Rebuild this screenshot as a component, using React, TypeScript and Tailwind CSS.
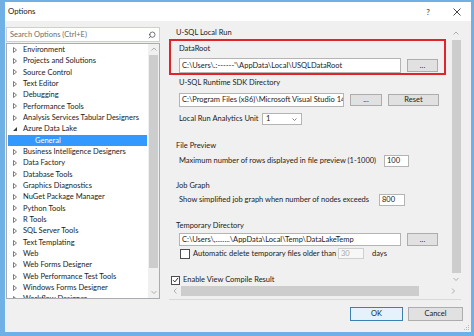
import React from 'react'
import { Search } from 'lucide-react'

type Kind = 'closed' | 'open' | 'selected'

const tree: { label: string; kind: Kind }[] = [
  { label: 'Environment', kind: 'closed' },
  { label: 'Projects and Solutions', kind: 'closed' },
  { label: 'Source Control', kind: 'closed' },
  { label: 'Text Editor', kind: 'closed' },
  { label: 'Debugging', kind: 'closed' },
  { label: 'Performance Tools', kind: 'closed' },
  { label: 'Analysis Services Tabular Designers', kind: 'closed' },
  { label: 'Azure Data Lake', kind: 'open' },
  { label: 'General', kind: 'selected' },
  { label: 'Business Intelligence Designers', kind: 'closed' },
  { label: 'Data Factory', kind: 'closed' },
  { label: 'Database Tools', kind: 'closed' },
  { label: 'Graphics Diagnostics', kind: 'closed' },
  { label: 'NuGet Package Manager', kind: 'closed' },
  { label: 'Python Tools', kind: 'closed' },
  { label: 'R Tools', kind: 'closed' },
  { label: 'SQL Server Tools', kind: 'closed' },
  { label: 'Text Templating', kind: 'closed' },
  { label: 'Web', kind: 'closed' },
  { label: 'Web Forms Designer', kind: 'closed' },
  { label: 'Web Performance Test Tools', kind: 'closed' },
  { label: 'Windows Forms Designer', kind: 'closed' },
  { label: 'Workflow Designer', kind: 'closed' },
]

function TreeRow({ label, kind }: { label: string; kind: Kind }) {
  if (kind === 'selected') {
    return (
      <div className="mx-[1px] flex h-[11.35px] shrink-0 items-center bg-[#3399ff] pl-[27px] text-white">
        {label}
      </div>
    )
  }
  return (
    <div className="flex h-[11.35px] shrink-0 items-center pl-[6px]">
      {kind === 'closed' ? (
        <svg width="4" height="6" viewBox="0 0 4 6">
          <path d="M0.5 0.5 L3.5 3 L0.5 5.5 Z" fill="none" stroke="#5a5a5a" strokeWidth="0.8" />
        </svg>
      ) : (
        <svg width="4" height="6" viewBox="0 0 4 6">
          <path d="M4 1 L4 5 L0 5 Z" fill="#3a3a3a" />
        </svg>
      )}
      <span className="ml-[6px] whitespace-nowrap">{label}</span>
    </div>
  )
}

function Chevron({ dir }: { dir: 'up' | 'down' | 'left' | 'right' }) {
  const d = {
    up: 'M0.5 3.5 L3 1 L5.5 3.5',
    down: 'M0.5 1 L3 3.5 L5.5 1',
    left: 'M3.5 0.5 L1 3 L3.5 5.5',
    right: 'M1 0.5 L3.5 3 L1 5.5',
  }[dir]
  const w = dir === 'up' || dir === 'down' ? 6 : 5
  const h = dir === 'up' || dir === 'down' ? 5 : 6
  return (
    <svg width={w} height={h} viewBox={`0 0 ${w} ${h}`}>
      <path d={d} fill="none" stroke="#a6a6a6" strokeWidth="0.9" />
    </svg>
  )
}

function TextBox({ className, value, disabled }: { className: string; value: string; disabled?: boolean }) {
  return (
    <div
      className={`flex items-center overflow-hidden whitespace-nowrap border pl-[2px] ${
        disabled ? 'border-[#cfcfcf] bg-[#f7f7f7] text-[#a8a8a8]' : 'border-[#b4b4b4] bg-white'
      } ${className}`}
    >
      {value}
    </div>
  )
}

function Btn({ className, children }: { className: string; children: React.ReactNode }) {
  return (
    <div className={`flex items-center justify-center border border-[#adadad] bg-[#e1e1e1] ${className}`}>
      {children}
    </div>
  )
}

function CheckBox({ checked, className }: { checked?: boolean; className: string }) {
  return (
    <div className={`flex items-center justify-center border border-[#4d4d4d] bg-white ${className}`}>
      {checked && (
        <svg width="8" height="8" viewBox="0 0 8 8">
          <path d="M1.2 4.2 L3.2 6.2 L7 1.6" fill="none" stroke="#222" strokeWidth="1.1" />
        </svg>
      )}
    </div>
  )
}

export default function App() {
  return (
    <div className="h-[336px] w-[474px] bg-[#6fb1e6] pb-[4px] pl-[5px] pr-[3px] pt-[2px] font-['Lato','Noto_Sans',sans-serif] text-[7.5px] leading-none text-[#1b1b1b]">
      <div className="flex h-full flex-col">
        {/* title bar */}
        <div className="flex h-[19px] shrink-0 items-center bg-white pl-[3px]">
          <span className="text-[7.8px]">Options</span>
          <span className="ml-auto w-[12px] text-center text-[8px] text-[#333]">?</span>
          <span className="ml-[17px] mr-[8px] flex w-[12px] justify-center">
            <svg width="8" height="8" viewBox="0 0 8 8">
              <path d="M0.5 0.5 L7.5 7.5 M7.5 0.5 L0.5 7.5" stroke="#333" strokeWidth="0.9" />
            </svg>
          </span>
        </div>

        {/* body */}
        <div className="relative flex flex-1 flex-col bg-[#f0f0f0]">
          <div className="flex h-[279px] shrink-0 items-start pt-[6px]">
            {/* left column */}
            <div className="ml-[1px] flex w-[154px] flex-col">
              <div className="flex h-[15px] items-center border border-[#cccedb] bg-white pl-[3px] text-[#6d6d6d]">
                <span>Search Options (Ctrl+E)</span>
                <Search size={8} strokeWidth={2.2} className="ml-auto mr-[3px] -scale-x-100 text-[#444]" />
              </div>
              <div className="mt-[1px] flex h-[256px] border border-[#a9abb2] bg-white">
                <div className="flex min-w-0 flex-1 flex-col overflow-hidden">
                  {tree.map((t) => (
                    <TreeRow key={t.label} label={t.label} kind={t.kind} />
                  ))}
                </div>
                <div className="flex w-[11px] flex-col items-center bg-[#f0f0f0]">
                  <div className="flex h-[11px] items-center">
                    <Chevron dir="up" />
                  </div>
                  <div className="h-[213px] w-[9px] bg-[#cdcdcd]" />
                  <div className="flex-1" />
                  <div className="flex h-[11px] items-center">
                    <Chevron dir="down" />
                  </div>
                </div>
              </div>
            </div>

            {/* right panel */}
            <div className="ml-[9px] flex w-[292px] flex-col">
              <div className="flex h-[258px]">
                <div className="flex min-w-0 flex-1 flex-col overflow-hidden">
                  <div className="flex h-[12px] shrink-0 items-center pl-[7px]">U-SQL Local Run</div>
                  <div className="flex h-[36px] w-[277px] shrink-0 flex-col border-2 border-[#e2232a] pl-[8px]">
                    <div className="flex h-[14px] items-center pt-[1px]">DataRoot</div>
                    <div className="mt-[3px] flex items-center">
                      <TextBox className="h-[15px] w-[222px]" value={"C:\\Users\\.:------'\\AppData\\Local\\USQLDataRoot"} />
                      <Btn className="ml-[6px] h-[13px] w-[31px]">...</Btn>
                    </div>
                  </div>

                  <div className="mt-[2px] flex h-[12px] shrink-0 items-center pl-[10px]">U-SQL Runtime SDK Directory</div>
                  <div className="mt-[4px] flex h-[14px] shrink-0 items-center pl-[10px]">
                    <TextBox className="h-[14px] w-[165px]" value={'C:\\Program Files (x86)\\Microsoft Visual Studio 14.0'} />
                    <Btn className="ml-[6px] h-[12px] w-[32px]">...</Btn>
                    <Btn className="ml-[6px] h-[12px] w-[51px]">Reset</Btn>
                  </div>

                  <div className="mt-[6px] flex h-[12px] shrink-0 items-center pl-[10px]">
                    <span className="w-[83px]">Local Run Analytics Unit</span>
                    <div className="flex h-[12px] w-[40px] items-center border border-[#b4b4b4] bg-white pl-[3px] pr-[4px]">
                      <span>1</span>
                      <span className="ml-auto">
                        <svg width="5" height="3" viewBox="0 0 5 3">
                          <path d="M0.5 0.5 L2.5 2.5 L4.5 0.5" fill="none" stroke="#666" strokeWidth="0.8" />
                        </svg>
                      </span>
                    </div>
                  </div>

                  <div className="mt-[15px] flex h-[12px] shrink-0 items-center pl-[7px]">File Preview</div>
                  <div className="mt-[3px] flex h-[12px] shrink-0 items-center pl-[10px]">
                    <span className="w-[205px] whitespace-nowrap">Maximum number of rows displayed in file preview (1-1000)</span>
                    <TextBox className="h-[12px] w-[25px]" value="100" />
                  </div>

                  <div className="mt-[13px] flex h-[12px] shrink-0 items-center pl-[7px]">Job Graph</div>
                  <div className="mt-[2px] flex h-[12px] shrink-0 items-center pl-[10px]">
                    <span className="w-[200px] whitespace-nowrap">Show simplified job graph when number of nodes exceeds</span>
                    <TextBox className="h-[12px] w-[26px]" value="800" />
                  </div>

                  <div className="mt-[14px] flex h-[12px] shrink-0 items-center pl-[7px]">Temporary Directory</div>
                  <div className="mt-[1px] flex h-[13px] shrink-0 items-center pl-[10px]">
                    <TextBox className="h-[13px] w-[222px]" value={'C:\\Users\\,........\\AppData\\Local\\Temp\\DataLakeTemp'} />
                    <Btn className="ml-[6px] h-[13px] w-[31px]">...</Btn>
                  </div>
                  <div className="mt-[2px] flex h-[11px] shrink-0 items-center pl-[11px]">
                    <CheckBox className="h-[10px] w-[10px]" />
                    <span className="ml-[3px] w-[145px] whitespace-nowrap">Automatic delete temporary files older than</span>
                    <TextBox className="h-[11px] w-[26px]" value="30" disabled />
                    <span className="ml-[8px]">days</span>
                  </div>

                  <div className="mt-[16px] flex h-[10px] shrink-0 items-center pl-[2px]">
                    <CheckBox checked className="h-[9px] w-[9px]" />
                    <span className="ml-[3px]">Enable View Compile Result</span>
                  </div>
                </div>

                {/* vertical scrollbar */}
                <div className="flex w-[10px] flex-col items-center bg-[#f0f0f0]">
                  <div className="flex h-[12px] items-center">
                    <Chevron dir="up" />
                  </div>
                  <div className="mt-[1px] h-[233px] w-[9px] bg-[#cdcdcd]" />
                  <div className="flex flex-1 items-center">
                    <Chevron dir="down" />
                  </div>
                </div>
              </div>

              {/* horizontal scrollbar */}
              <div className="flex h-[12px] items-center bg-[#f0f0f0]">
                <div className="flex w-[12px] justify-center">
                  <Chevron dir="left" />
                </div>
                <div className="h-[10px] w-[238px] bg-[#cdcdcd]" />
                <div className="flex-1" />
                <div className="mr-[2px] flex w-[12px] justify-center">
                  <Chevron dir="right" />
                </div>
              </div>
              <div className="mt-[2px] h-px bg-[#d9d9d9]" />
            </div>
          </div>

          {/* footer */}
          <div className="flex justify-end gap-[5px] pr-[8px] pt-[7px]">
            <div className="flex h-[14px] w-[53px] items-center justify-center border-[1.5px] border-[#3c7fb1] bg-[#e5f1fb]">
              OK
            </div>
            <Btn className="h-[14px] w-[55px]">Cancel</Btn>
          </div>

          <svg className="absolute bottom-[1px] right-[1px]" width="7" height="7" viewBox="0 0 7 7">
            <g fill="#b8b8b8">
              <rect x="5" y="1" width="1" height="1" />
              <rect x="3" y="3" width="1" height="1" />
              <rect x="5" y="3" width="1" height="1" />
              <rect x="1" y="5" width="1" height="1" />
              <rect x="3" y="5" width="1" height="1" />
              <rect x="5" y="5" width="1" height="1" />
            </g>
          </svg>
        </div>
      </div>
    </div>
  )
}
